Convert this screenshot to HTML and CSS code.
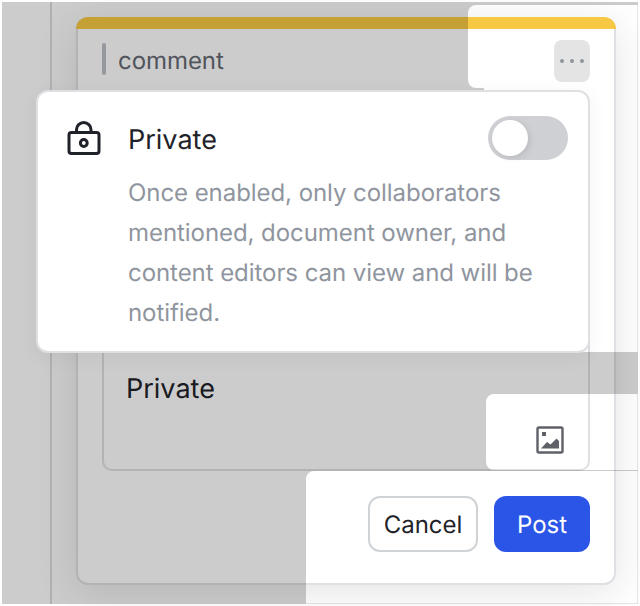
FILE: index.html
```html
<!DOCTYPE html>
<html lang="en">
<head>
<meta charset="utf-8">
<title>Private comment</title>
<link rel="stylesheet" href="styles.css">
</head>
<body>
<div class="stage">
  <div class="rail"></div>
  <section class="card">
    <div class="card-top"></div>
    <header class="card-head">
      <span class="quote-bar"></span>
      <span class="quote-text">comment</span>
      <button class="more" aria-label="More"><span></span><span></span><span></span></button>
    </header>
    <div class="editor">
      <div class="editor-text">Private</div>
      <svg class="image-icon" viewBox="0 0 28 28" width="28" height="28" aria-hidden="true">
        <rect x="1.500" y="1.500" width="25" height="25" rx="1.500" fill="none" stroke="#5f6169" stroke-width="2.400"/>
        <rect x="6" y="6" width="4" height="4" fill="#5f6169"/>
        <path d="M5 22.500l6-6.500 3.500 2.500 6-6 2.500 2.500v7.500z" fill="#5f6169"/>
      </svg>
    </div>
    <footer class="actions">
      <button class="btn btn-cancel">Cancel</button>
      <button class="btn btn-post">Post</button>
    </footer>
  </section>
  <svg class="dim" viewBox="0 0 640 606" width="640" height="606" aria-hidden="true">
    <path fill-rule="evenodd" d="M2 2H638V604H2Z M476 5H637.500V352H500V92H484V88H476a8 8 0 0 1-8-8V13a8 8 0 0 1 8-8Z M494 394H637.500V470H494a8 8 0 0 1-8-8V402a8 8 0 0 1 8-8Z M314 471H637.500V603.500H306V479a8 8 0 0 1 8-8Z"/>
  </svg>
  <aside class="popover">
    <div class="pop-head">
      <svg class="lock" viewBox="0 0 34 34" width="34" height="34" aria-hidden="true">
        <path d="M9.500 11V8.800a7.250 7.250 0 0 1 14.500 0V11" fill="none" stroke="#1f2329" stroke-width="3"/>
        <rect x="2" y="11.500" width="30" height="21" rx="2.500" fill="none" stroke="#1f2329" stroke-width="3"/>
        <circle cx="16.800" cy="22" r="3.400" fill="none" stroke="#1f2329" stroke-width="3"/>
      </svg>
      <span class="pop-title">Private</span>
      <span class="toggle"><span class="knob"></span></span>
    </div>
    <p class="pop-desc">Once enabled, only collaborators mentioned, document owner, and content editors can view and will be notified.</p>
  </aside>
</div>
</body>
</html>
```
FILE: styles.css
```css
* { box-sizing: border-box; }
html, body { margin: 0; padding: 0; background: #fff; }
body { font-family: Inter, "Liberation Sans", sans-serif; text-rendering: geometricPrecision; }
.stage { position: relative; width: 640px; height: 606px; overflow: hidden; padding: 17px 0 0 76px; }
.rail { position: absolute; left: 50px; top: 2px; bottom: 2px; width: 2px; background: #dcdde0; }
.card { width: 540px; height: 568px; background: #fff; border: 2px solid #dee0e3; border-top: 0; border-radius: 12px; box-shadow: 0 8px 40px rgba(31,35,41,.12); display: flex; flex-direction: column; }
.card-top { height: 12px; margin: 0 -2px; background: #f7c843; border-radius: 12px 12px 0 0; flex: none; }
.card-head { display: flex; align-items: center; height: 64px; padding: 0 24px; flex: none; }
.quote-bar { width: 4px; height: 32px; border-radius: 2px; background: #bbbfc4; margin: 0 12px 4px 0; }
.quote-text { font-size: 24px; letter-spacing: -.06px; color: #646a73; margin-bottom: 2px; flex: 1; }
.more { width: 36px; height: 42px; border: 0; padding: 0; border-radius: 8px; background: #e4e4e4; display: flex; align-items: center; justify-content: center; gap: 6px; }
.more span { width: 4px; height: 4px; border-radius: 50%; background: #8f959e; }
.editor { position: relative; margin: 0 24px; height: 378px; flex: none; border: 2px solid #dee0e3; border-radius: 10px; padding: 277px 22px 0; }
.editor-text { font-size: 27px; line-height: 34px; color: #1f2329; }
.image-icon { position: absolute; right: 24px; bottom: 15px; }
.actions { display: flex; justify-content: flex-end; gap: 16px; padding: 25px 24px 0; }
.btn { height: 56px; border-radius: 12px; font: 24px Inter, "Liberation Sans", sans-serif; text-rendering: geometricPrecision; }
.btn-cancel { width: 110px; background: #fff; border: 2px solid #d0d3d6; color: #1f2329; }
.btn-post { width: 96px; background: #2b55e6; border: 0; color: #fff; }
.dim { position: absolute; left: 0; top: 0; }
.dim path { fill: rgba(0,0,0,.2); }
.popover { position: absolute; left: 36px; top: 90px; width: 554px; height: 263px; background: #fff; border: 2px solid #dee0e3; border-radius: 12px; padding: 24px 20px 0 29px; box-shadow: 0 4px 20px rgba(0,0,0,.05); }
.pop-head { display: flex; align-items: center; height: 44px; }
.lock { margin-right: 27px; flex: none; }
.pop-title { font-size: 27px; color: #1f2329; margin-top: 2px; flex: 1; }
.toggle { width: 80px; height: 44px; border-radius: 22px; background: #cfd0d4; padding: 4px; flex: none; }
.knob { display: block; width: 36px; height: 36px; border-radius: 50%; background: #fff; box-shadow: 2px 2px 6px rgba(0,0,0,.1); }
.pop-desc { margin: 13px 0 0 61px; font-size: 24px; letter-spacing: -.06px; line-height: 40px; color: #8f959e; }
```
